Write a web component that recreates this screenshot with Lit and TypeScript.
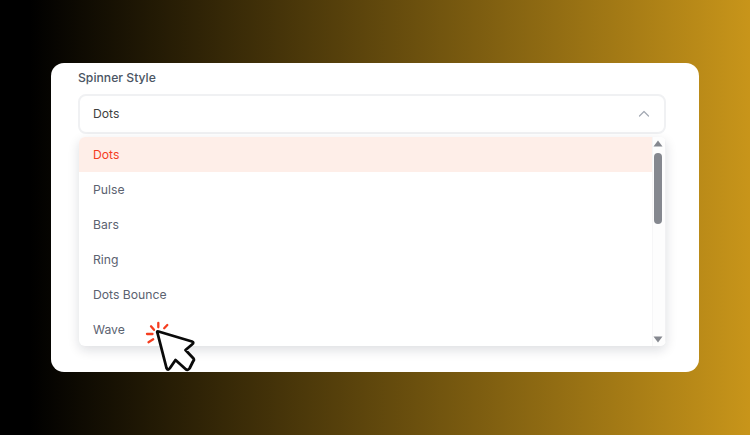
import { LitElement, html, css, svg } from "lit";
import { customElement } from "lit/decorators.js";

const OPTIONS = ["Dots", "Pulse", "Bars", "Ring", "Dots Bounce", "Wave"];

@customElement("app-root")
export class AppRoot extends LitElement {
  static styles = css`
    :host {
      display: flex;
      width: 750px;
      height: 435px;
      align-items: center;
      justify-content: center;
      position: relative;
      overflow: hidden;
      background: linear-gradient(90deg, #000 4%, #c8951a 100%);
      font-family: Inter, "Liberation Sans", sans-serif;
    }
    .card {
      box-sizing: border-box;
      width: 648px;
      height: 309px;
      background: #fff;
      border-radius: 13px;
      padding: 6px 33px 0 27px;
      display: flex;
      flex-direction: column;
    }
    .label {
      font-size: 12.2px;
      font-weight: 500;
      line-height: 18px;
      color: #4b5563;
      margin-bottom: 7px;
    }
    .select {
      box-sizing: border-box;
      height: 40px;
      border: 2px solid #f0f1f3;
      border-radius: 8px;
      display: flex;
      align-items: center;
      justify-content: space-between;
      padding: 0 14px 2px 13px;
      font-size: 12.2px;
      color: #3f3f3f;
      margin-bottom: 3px;
    }
    .chev { width: 12px; height: 8px; display: block; margin-top: 2px; }
    .menu {
      margin-left: 1px;
      height: 209px;
      border-radius: 6px;
      background: #fff;
      box-shadow: 0 4px 12px rgba(17, 24, 39, 0.14);
      display: flex;
      overflow: hidden;
    }
    .list { flex: 1; min-width: 0; }
    .item {
      height: 35px;
      display: flex;
      align-items: center;
      padding-left: 14px;
      font-size: 12.2px;
      color: #5b6270;
    }
    .item.active { background: #feeee8; color: #f53d1f; }
    .track {
      width: 14px;
      flex: none;
      box-sizing: border-box;
      border-left: 1px solid #f6f6f7;
      border-right: 1px solid #f1f1f3;
      background: #fdfdfd;
      display: flex;
      flex-direction: column;
      align-items: center;
      padding: 3px 2px 3px 0;
    }
    .arrow { width: 10px; height: 7px; display: block; flex: none; }
    .thumb {
      width: 8px;
      height: 71px;
      border-radius: 4px;
      background: #85888f;
      margin-top: 6px;
    }
    .spacer { flex: 1; }
    .cursor {
      position: absolute;
      left: 140px;
      top: 315px;
      width: 64px;
      height: 64px;
    }
  `;

  render() {
    return html`
      <div class="card">
        <div class="label">Spinner Style</div>
        <div class="select">
          <span>Dots</span>
          <svg class="chev" viewBox="0 0 12 8" fill="none" stroke="#a3a9b3" stroke-width="1.2" stroke-linecap="round" stroke-linejoin="round">
            <path d="M1.5 6 L6 1.5 L10.5 6" />
          </svg>
        </div>
        <div class="menu">
          <div class="list">
            ${OPTIONS.map(
              (o, i) => html`<div class="item ${i === 0 ? "active" : ""}">${o}</div>`
            )}
          </div>
          <div class="track">
            <svg class="arrow" viewBox="0 0 10 7"><path d="M5 0.5 L9.5 6.5 H0.5 Z" fill="#85888f" /></svg>
            <div class="thumb"></div>
            <div class="spacer"></div>
            <svg class="arrow" viewBox="0 0 10 7"><path d="M5 6.5 L9.5 0.5 H0.5 Z" fill="#85888f" /></svg>
          </div>
        </div>
      </div>
      <svg class="cursor" viewBox="0 0 64 64" fill="none">
        ${svg`
          <path d="M17.5 18 Q16.500 16 18.500 16.500 L52 26.500 Q54.500 27.500 52 29.500 L45.500 35 L53.500 43.500 Q54.500 45 53 46.500 L49.500 53.500 Q47.500 56 45.500 54 L35.500 45 L30 53 Q28 56 26.500 53 Z" fill="#fff" stroke="#0a0a0a" stroke-width="2.8" stroke-linejoin="round"/>
          <g stroke="#f53d1f" stroke-width="2.3" stroke-linecap="round">
            <path d="M18.300 8 L18.300 12.300" />
            <path d="M27.300 10 L24.200 13.200" />
            <path d="M11 11.300 L14 14.800" />
            <path d="M7 19 L12.500 19" />
            <path d="M8.500 27.200 L13.200 24.300" />
          </g>
        `}
      </svg>
    `;
  }
}
